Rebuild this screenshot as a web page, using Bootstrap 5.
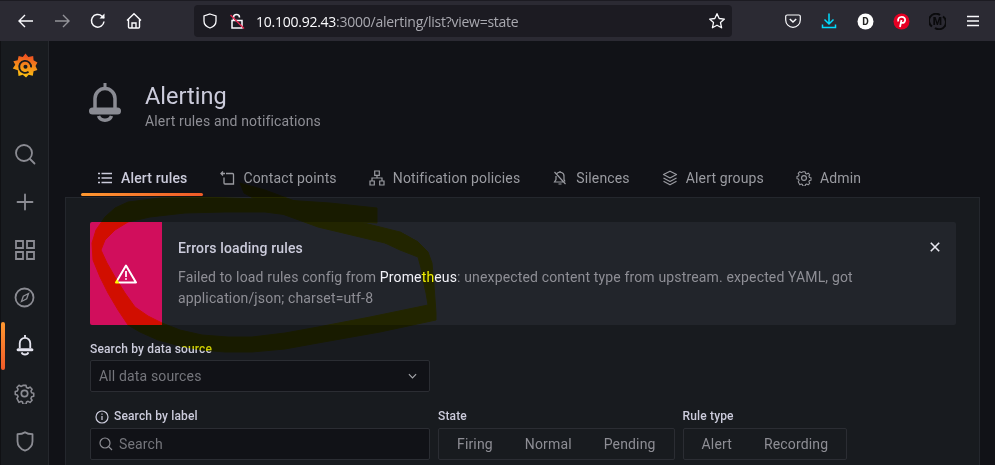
<!DOCTYPE html>
<html lang="en">
<head>
<meta charset="utf-8">
<title>Alerting</title>
<link href="https://cdn.jsdelivr.net/npm/bootstrap@5.3.0/dist/css/bootstrap.min.css" rel="stylesheet">
<style>
html,body{height:465px;overflow:hidden;background:#111217;}
body{font-family:Roboto,"Liberation Sans",sans-serif;font-size:14px;letter-spacing:.15px;color:#ccccdc;position:relative;}
.ff-bar{height:41px;background:#2b2a33;border-top:1px solid #1c1b22;}
.ff-btn{width:36px;height:32px;color:#fbfbfe;}
.ff-url{width:538px;height:32px;background:#1c1b22;border-radius:4px;margin-left:42px;padding:0 6px 0 8px;color:#fbfbfe;font-family:"Open Sans",sans-serif;font-size:14px;letter-spacing:-.25px;}
.ff-url .dim{color:#a9a9b0;}
.ff-lock{margin-left:10px;}
.ff-txt{margin-left:10px;}
.ff-right{margin-left:43px;}
.shell{height:424px;overflow:hidden;}
.side{width:49px;flex:none;background:#181b1f;border-right:1px solid #25282d;border-left:1px solid #101114;position:relative;color:#8b8c93;}
.side-logo{height:64px;padding-top:12px;}
.side-gap{height:25px;}
.side-item{height:48px;}
.side-item.on{color:#e4e4ee;}
.side-bar{position:absolute;left:0;top:281px;width:4px;height:48px;border-radius:2px;background:linear-gradient(#ff9830,#f05a28);}
.pg{min-width:0;padding:0 15px 0 16px;}
.pg-head{padding:42px 0 0 23px;height:115px;gap:23px;}
.pg-title{font-size:23.5px;letter-spacing:0;line-height:28px;color:#ccccdc;margin:0;font-weight:400;margin-top:-1px;}
.pg-sub{font-size:14px;line-height:18px;color:#8e8e95;margin-top:2px;}
.tabs{margin-left:16px;height:41px;margin-bottom:0;}
.tb{padding:3px 16px 0;height:41px;gap:8px;color:#9a9ba1;position:relative;font-size:14px;white-space:nowrap;}
.tb svg{flex:none;}
.tb.on{color:#ccccdc;font-weight:500;}
.tb.on::after{content:"";position:absolute;left:0;right:0;bottom:1px;height:3px;border-radius:2px;background:linear-gradient(90deg,#ff9830,#f05a28);}
.panel{background:#181b1f;border:1px solid #24272d;border-bottom:0;padding:24px 24px 0;height:268px;}
.al{background:#22252b;height:103px;border-radius:2px;overflow:hidden;width:866px;}
.al-ic{width:72px;flex:none;background:#d10e5c;}
.al-body{padding:16px;color:#8e8e95;line-height:21px;}
.al-t{color:#ccccdc;font-weight:500;line-height:20px;margin-bottom:9px;}
.al-x{width:42px;flex:none;padding-top:16px;color:#ccccdc;}
.hl{color:#f2f2f8;}
.lb{font-size:12px;font-weight:500;line-height:15px;color:#ccccdc;margin-bottom:4px;}
.lb-top{margin-top:17px;margin-bottom:3px;}
.fld{height:32px;background:#111217;border:1px solid #2b2d33;border-radius:2px;color:#75767c;padding:0 8px;}
.w340{width:340px;}
.srow{margin-top:17px;}
.i-ic{margin:0 5px;}
.s-ic{margin-right:6px;}
.seg{height:32px;border:1px solid #2b2d33;border-radius:2px;padding:0 2px;color:#8e8e95;}
.seg span{padding:0 16px;}
.ink{position:absolute;left:0;top:0;width:995px;height:465px;mix-blend-mode:multiply;pointer-events:none;}
</style>
</head>
<body>
<div class="ff-bar d-flex align-items-center ps-2">
  <div class="ff-btn d-flex align-items-center justify-content-center"><svg width="18" height="18" viewBox="0 0 18 18" fill="none" stroke="currentColor" stroke-width="1.4"><path d="M16 9H2M8 3L2 9l6 6"/></svg></div>
  <div class="ff-btn d-flex align-items-center justify-content-center opacity-50"><svg width="18" height="18" viewBox="0 0 18 18" fill="none" stroke="currentColor" stroke-width="1.4"><path d="M2 9h14M10 3l6 6-6 6"/></svg></div>
  <div class="ff-btn d-flex align-items-center justify-content-center"><svg width="18" height="18" viewBox="0 0 18 18" fill="none" stroke="currentColor" stroke-width="1.5"><path d="M15 9.500A6.300 6.300 0 1 1 13 4.200L15 6"/><path d="M15.500 1.500V6.500H10.500" fill="currentColor" stroke="none"/></svg></div>
  <div class="ff-btn d-flex align-items-center justify-content-center"><svg width="18" height="18" viewBox="0 0 18 18" fill="none" stroke="currentColor" stroke-width="1.4"><path d="M2 8.500L9 1.800l7 6.700M3.500 7.500V15a1 1 0 0 0 1 1h9a1 1 0 0 0 1-1V7.500M7 16v-5h4v5"/></svg></div>
  <div class="ff-url d-flex align-items-center">
    <svg width="16" height="16" viewBox="0 0 16 16" fill="none" stroke="#fbfbfe" stroke-width="1.3"><path d="M8 1l6 2v5c0 3.500-3 6-6 7-3-1-6-3.500-6-7V3z"/></svg>
    <svg class="ff-lock" width="18" height="18" viewBox="0 0 18 18" fill="none"><path d="M5.500 8.500V5.500a3 3 0 0 1 6 0M4 8.500h10V16H4z" stroke="#fbfbfe" stroke-width="1.5"/><path d="M2.500 3L16 16.500" stroke="#e22850" stroke-width="1.4"/></svg>
    <span class="ff-txt"><span>10.100.92.43</span><span class="dim">:3000/alerting/list?view=state</span></span>
    <svg class="ms-auto" width="18" height="18" viewBox="0 0 18 18" fill="none" stroke="#fbfbfe" stroke-width="1.3"><path d="M9 1.700l2.200 4.800 5.200.6-3.900 3.500 1.100 5.200L9 13.200l-4.600 2.600 1.100-5.200L1.600 7.100l5.200-.6z" stroke-linejoin="round"/></svg>
  </div>
  <div class="ff-right d-flex align-items-center">
    <div class="ff-btn d-flex align-items-center justify-content-center"><svg width="16" height="16" viewBox="0 0 16 16" fill="none" stroke="#fbfbfe" stroke-width="1.2"><path d="M2.200 2h11.600a1.500 1.500 0 0 1 1.500 1.500V7A7.300 7.300 0 0 1 .700 7V3.500A1.500 1.500 0 0 1 2.200 2z"/><path d="M4.800 6L8 9l3.200-3" stroke-width="1.500"/></svg></div>
    <div class="ff-btn d-flex align-items-center justify-content-center"><svg width="16" height="16" viewBox="0 0 16 16" fill="none" stroke="#00ddff" stroke-width="1.500"><path d="M8 .5v10M3.500 6.500L8 11l4.500-4.500M1.500 11.500v3h13v-3"/></svg></div>
    <div class="ff-btn d-flex align-items-center justify-content-center"><svg width="17" height="17" viewBox="0 0 17 17"><circle cx="8.500" cy="8.500" r="8" fill="#fff"/><text x="8.500" y="12" text-anchor="middle" font-size="10" font-weight="700" font-family="Roboto,sans-serif" fill="#222">D</text></svg></div>
    <div class="ff-btn d-flex align-items-center justify-content-center"><svg width="17" height="17" viewBox="0 0 17 17"><circle cx="8.500" cy="8.500" r="8" fill="#e60023"/><path d="M7 14l1.500-7M5.300 8.500C4.300 5.500 6.500 3.800 8.700 3.800c2.200 0 3.700 1.500 3.400 3.600-.3 2-2 3.200-3.700 2.100" fill="none" stroke="#fff" stroke-width="1.800"/></svg></div>
    <div class="ff-btn d-flex align-items-center justify-content-center"><svg width="17" height="17" viewBox="0 0 17 17"><path d="M3 13.500A7 7 0 0 1 11 2M14 3.500A7 7 0 0 1 6 15" fill="none" stroke="#0a0a0c" stroke-width="2"/><text x="8.500" y="12" text-anchor="middle" font-size="10.500" font-weight="900" font-family="Roboto,sans-serif" fill="#0a0a0c">M</text></svg></div>
    <div class="ff-btn d-flex align-items-center justify-content-center"><svg width="14" height="12" viewBox="0 0 14 12" stroke="#fbfbfe" stroke-width="1.300"><path d="M1 1.500h12M1 6h12M1 10.500h12"/></svg></div>
  </div>
</div>

<div class="shell d-flex">
  <nav class="side d-flex flex-column align-items-center">
    <div class="side-logo">
      <svg width="26" height="27" viewBox="0 0 27 28">
        <defs><linearGradient id="gf" x1="0" y1="1" x2="0.15" y2="0"><stop offset="0" stop-color="#fcd010"/><stop offset="1" stop-color="#ee4f22"/></linearGradient></defs>
        <path d="M14 .5l3 3.700 5-1.200.4 4.500 4 2.300-2 3.800 2 4-4 1.300-.8 4.600-4.300-1-2.700 3-3.400-2.900-4.400 1.300L6 18 .8 16.200l2.600-3.900L1.400 8.500l4.500-1 1-4.500 4.300 1.200z" fill="url(#gf)"/>
        <path d="M19.800 15a6.200 6.200 0 1 0-2.600 4.400" fill="none" stroke="#181b1f" stroke-width="1.900"/>
        <path d="M16 16.200a3 3 0 1 1 1-2.800" fill="none" stroke="#181b1f" stroke-width="0"/>
        <circle cx="14" cy="14.200" r="2.100" fill="#181b1f"/>
      </svg>
    </div>
    <div class="side-gap"></div>
    <div class="side-item d-flex align-items-center justify-content-center"><svg width="22" height="22" viewBox="0 0 22 22" fill="none" stroke="currentColor" stroke-width="1.800" stroke-linecap="round"><circle cx="10" cy="10" r="8"/><path d="M16 16l4.500 4.500"/></svg></div>
    <div class="side-item d-flex align-items-center justify-content-center"><svg width="18" height="18" viewBox="0 0 18 18" stroke="currentColor" stroke-width="1.800" stroke-linecap="round"><path d="M9 1.500v15M1.500 9h15"/></svg></div>
    <div class="side-item d-flex align-items-center justify-content-center"><svg width="20" height="20" viewBox="0 0 20 20" fill="none" stroke="currentColor" stroke-width="1.800"><path d="M1 1h7v7H1zM12 1h7v7h-7zM1 12h7v7H1zM12 12h7v7h-7z"/></svg></div>
    <div class="side-item d-flex align-items-center justify-content-center"><svg width="21" height="21" viewBox="0 0 21 21" fill="none" stroke="currentColor" stroke-width="1.800"><circle cx="10.500" cy="10.500" r="9"/><path d="M14.500 6.500l-1.800 5.200-5.200 2.800 1.800-5.200z" stroke-width="1.300"/></svg></div>
    <div class="side-item on d-flex align-items-center justify-content-center"><svg width="18" height="21" viewBox="0 0 34 40" fill="none" stroke="currentColor"><path d="M17 0v5" stroke-width="3.500"/><path d="M7 25V15.500a10 10 0 0 1 20 0V25" stroke-width="3.500"/><path d="M4 28h26" stroke-width="6" stroke-linecap="round"/><path d="M10.500 33c2 5.500 11 5.500 13 0" stroke-width="3.500"/></svg></div>
    <div class="side-item d-flex align-items-center justify-content-center"><svg width="21" height="21" viewBox="0 0 21 21" fill="none" stroke="currentColor" stroke-width="1.700"><circle cx="10.500" cy="10.500" r="3.200"/><path d="M8.800 1.500h3.400l.5 2.400 1.800.8 2.100-1.300 2.300 2.400-1.300 2 .8 1.900 2.300.5v3.400l-2.300.5-.8 1.900 1.300 2-2.300 2.400-2.100-1.300-1.800.8-.5 2.400H8.800l-.5-2.400-1.800-.8-2.100 1.300L2.100 16l1.300-2-.8-1.900-2.300-.5V8.200l2.300-.5.8-1.900-1.300-2 2.300-2.400 2.100 1.300 1.800-.8z" stroke-linejoin="round" transform="translate(1 1) scale(.905)"/></svg></div>
    <div class="side-item d-flex align-items-center justify-content-center"><svg width="18" height="21" viewBox="0 0 18 21" fill="none" stroke="currentColor" stroke-width="1.800" stroke-linejoin="round"><path d="M9 1.200c2 1.500 4.500 2 7.500 2v7c0 4.500-3.500 8-7.500 9.500-4-1.500-7.500-5-7.500-9.500v-7c3 0 5.500-.5 7.500-2z"/></svg></div>
    <div class="side-bar"></div>
  </nav>

  <main class="pg flex-grow-1">
    <header class="pg-head d-flex align-items-start">
      <svg width="34" height="40" viewBox="0 0 34 40" fill="none" stroke="#8a8b93"><path d="M17 0v5" stroke-width="3"/><path d="M7 25V15.500a10 10 0 0 1 20 0V25" stroke-width="3.500"/><path d="M4.500 28h25" stroke-width="7" stroke-linecap="round"/><path d="M10.500 33c2 5.500 11 5.500 13 0" stroke-width="3.500"/></svg>
      <div>
        <h1 class="pg-title">Alerting</h1>
        <div class="pg-sub">Alert rules and notifications</div>
      </div>
    </header>
    <div class="tabs d-flex">
      <div class="tb on d-flex align-items-center"><svg width="16" height="16" viewBox="0 0 16 16" stroke="currentColor" stroke-width="1.300"><path d="M4.500 3.500H15M4.500 8H15M4.500 12.500H15M1 3.500h2M1 8h2M1 12.500h2"/></svg><span>Alert rules</span></div>
      <div class="tb d-flex align-items-center"><svg width="16" height="16" viewBox="0 0 16 16" fill="none" stroke="currentColor" stroke-width="1.300"><path d="M7 3.500h6.500a1 1 0 0 1 1 1v9.500H6a1 1 0 0 1-1-1V7.500M2 3.500h4M4 1.500L2 3.500l2 2"/></svg><span>Contact points</span></div>
      <div class="tb d-flex align-items-center"><svg width="16" height="16" viewBox="0 0 16 16" fill="none" stroke="currentColor" stroke-width="1.200"><path d="M5.700 1h4.600v4.300H5.700zM1 11h4.300v4H1zM10.700 11H15v4h-4.300zM8 5.300V8M3 11V8h10v3"/></svg><span>Notification policies</span></div>
      <div class="tb d-flex align-items-center"><svg width="16" height="16" viewBox="0 0 16 16" fill="none" stroke="currentColor" stroke-width="1.200"><path d="M8 1v1.500M5 3.500A4 4 0 0 1 12 6.500v3l1 2M4 6v3.500L2.500 12H12M6.500 14h3M2.500 2l11 12"/></svg><span>Silences</span></div>
      <div class="tb d-flex align-items-center"><svg width="16" height="16" viewBox="0 0 16 16" fill="none" stroke="currentColor" stroke-width="1.200" stroke-linejoin="round"><path d="M8 1.200L14.500 4.500 8 8 1.500 4.500zM1.500 8L8 11.500 14.500 8M1.500 11.200L8 14.800l6.500-3.600"/></svg><span>Alert groups</span></div>
      <div class="tb d-flex align-items-center"><svg width="16" height="16" viewBox="0 0 21 21" fill="none" stroke="currentColor" stroke-width="1.500"><circle cx="10.500" cy="10.500" r="3.200"/><path d="M8.800 1.500h3.400l.5 2.400 1.800.8 2.100-1.300 2.300 2.400-1.300 2 .8 1.900 2.300.5v3.400l-2.300.5-.8 1.900 1.300 2-2.300 2.400-2.100-1.300-1.800.8-.5 2.400H8.800l-.5-2.400-1.800-.8-2.100 1.300L2.100 16l1.300-2-.8-1.900-2.300-.5V8.200l2.300-.5.8-1.900-1.300-2 2.300-2.400 2.100 1.300 1.800-.8z" stroke-linejoin="round" transform="translate(1 1) scale(.905)"/></svg><span>Admin</span></div>
    </div>
    <section class="panel">
      <div class="al d-flex">
        <div class="al-ic d-flex align-items-center justify-content-center"><svg width="22" height="20" viewBox="0 0 22 20" fill="none" stroke="#fff" stroke-width="2" stroke-linejoin="round"><path d="M11 1.500L21 18.500H1z"/><path d="M11 7v6M11 14.200v1.600" stroke-width="1.800"/></svg></div>
        <div class="al-body flex-grow-1">
          <div class="al-t">Errors loading rules</div>
          <div>Failed to load rules config from <span class="hl">Prometheus</span>: unexpected content type from upstream. expected YAML, got application/json; charset=utf-8</div>
        </div>
        <div class="al-x d-flex justify-content-center"><svg width="10" height="10" viewBox="0 0 10 10" class="mt-1" stroke="#e8e8f0" stroke-width="1.600"><path d="M.8.8l8.400 8.400M9.200.8L.8 9.200"/></svg></div>
      </div>
      <div class="lb lb-top">Search by data source</div>
      <div class="fld w340 d-flex align-items-center justify-content-between"><span>All data sources</span><svg width="9" height="6" viewBox="0 0 10 6" fill="none" stroke="#a5a6ab" stroke-width="1.300" class="me-1"><path d="M1 1l4 4 4-4"/></svg></div>
      <div class="d-flex gap-2 srow">
        <div class="w340">
          <div class="lb d-flex align-items-center"><svg width="14" height="14" viewBox="0 0 14 14" fill="none" stroke="#ccccdc" stroke-width="1.200" class="i-ic"><circle cx="7" cy="7" r="6"/><path d="M7 6v4M7 3.500v1.300"/></svg>Search by label</div>
          <div class="fld d-flex align-items-center"><svg width="14" height="14" viewBox="0 0 14 14" fill="none" stroke="#8e8e95" stroke-width="1.200" class="s-ic"><circle cx="6" cy="6" r="5"/><path d="M9.700 9.700L13 13"/></svg><span>Search</span></div>
        </div>
        <div>
          <div class="lb">State</div>
          <div class="seg d-flex align-items-center"><span>Firing</span><span>Normal</span><span>Pending</span></div>
        </div>
        <div>
          <div class="lb">Rule type</div>
          <div class="seg d-flex align-items-center"><span>Alert</span><span>Recording</span></div>
        </div>
      </div>
    </section>
  </main>
</div>
<svg class="ink" viewBox="0 0 995 465" fill="#ffff00" stroke="#ffff00" stroke-width="1" stroke-linejoin="round">
  <polygon points="92,243 96,230 105,217 115,208 128,202 160,198 202,197 285,200 330,203 377,208 377,223 340,221 318,219 265,212 225,212 185,213 150,217 128,222 115,230 105,240 101,250 107,263 115,277 125,293 135,307 148,316 162,323 180,330 202,335 228,337 252,337 285,333 318,327 370,317 428,305 426,293 423,280 421,268 418,257 400,250 385,243 400,232 418,242 428,252 432,263 434,285 436,313 436,320 380,332 318,343 285,349 252,352 225,352 202,350 180,346 158,340 140,332 128,325 118,310 108,293 100,277 93,260"/>
  <polygon points="240,183 265,190 292,200 352,220 400,232 418,242 385,243 318,227 285,215 262,203 244,193"/>
</svg>
</body>
</html>
